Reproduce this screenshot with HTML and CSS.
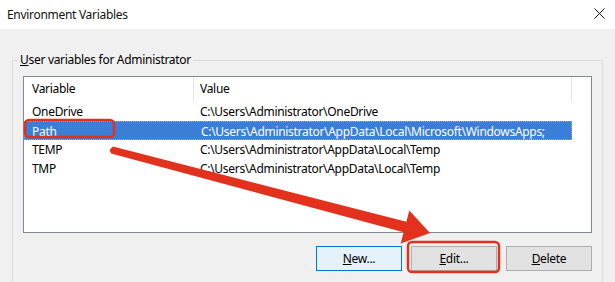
FILE: index.html
```html
<!DOCTYPE html>
<html lang="en">
<head>
    <meta charset="UTF-8">
    <title>Environment Variables</title>
    <link rel="stylesheet" href="styles.css">
</head>
<body>

    <div class="window">
        <div class="titlebar">
            <span class="title">Environment Variables</span>
            <svg class="close" width="11" height="11" viewBox="0 0 11 11">
                <path d="M0.5 0.5 L10.5 10.5 M10.5 0.5 L0.5 10.5" stroke="#111" stroke-width="1" fill="none"/>
            </svg>
        </div>

        <div class="content">
            <fieldset class="group">
                <legend><u>U</u>ser variables for Administrator</legend>
                <div class="group-body">
                    <div class="list">
                        <div class="row header">
                            <div class="cell name">Variable</div>
                            <div class="cell value">Value</div>
                        </div>
                        <div class="row">
                            <div class="cell name">OneDrive</div>
                            <div class="cell value">C:\Users\Administrator\OneDrive</div>
                        </div>
                        <div class="row selected">
                            <div class="cell name">Path</div>
                            <div class="cell value">C:\Users\Administrator\AppData\Local\Microsoft\WindowsApps;</div>
                        </div>
                        <div class="row">
                            <div class="cell name">TEMP</div>
                            <div class="cell value">C:\Users\Administrator\AppData\Local\Temp</div>
                        </div>
                        <div class="row">
                            <div class="cell name">TMP</div>
                            <div class="cell value">C:\Users\Administrator\AppData\Local\Temp</div>
                        </div>
                    </div>

                    <div class="buttons">
                        <button class="btn default"><u>N</u>ew...</button>
                        <button class="btn"><u>E</u>dit...</button>
                        <button class="btn"><u>D</u>elete</button>
                    </div>
                </div>
            </fieldset>
        </div>
    </div>

    <!-- red annotation drawn over the dialog -->
    <svg class="annotation" width="615" height="282" viewBox="0 0 615 282">
        <rect x="25" y="120" width="89" height="17" rx="4" fill="none" stroke="#e2311d" stroke-width="2.5"/>
        <rect x="408" y="242" width="91" height="30" rx="4" fill="none" stroke="#e2311d" stroke-width="2.5"/>
        <polygon fill="#e2311d" points="112.9,146.6 406.4,221.7 409.3,210.6 430,233 400.7,243.4 403.6,232.3 111.1,153.4 109.5,150"/>
    </svg>

</body>
</html>
```

FILE: styles.css
```css
body {
    margin: 0;
    width: 615px;
    height: 282px;
    overflow: hidden;
    background-color: #f0f0f0;
    font-family: 'Noto Sans', 'Liberation Sans', sans-serif;
    font-size: 12px;
    letter-spacing: -0.3px;
    color: #000;
    position: relative;
}
.titlebar {
    height: 29px;
    background: #fff;
    display: flex;
    align-items: center;
    justify-content: space-between;
    padding: 0 10px 0 7px;
}
.title {
    color: #111;
}
.close {
    margin-top: -2px;
}
.content {
    padding: 23px 12px 0 12px;
}
.group {
    margin: 0;
    padding: 0;
    border: 1px solid #dcdcdc;
    height: 240px;
}
.group legend {
    margin-left: 5px;
    padding: 0 2px;
    line-height: 16px;
}
.group-body {
    padding: 8px 10px 0 10px;
}
.list {
    height: 155px;
    background: #fff;
    border: 1px solid #828790;
}
.row {
    display: flex;
    width: 548px;
    height: 19px;
    line-height: 19px;
    box-sizing: border-box;
    white-space: nowrap;
}
.row.header {
    height: 25px;
    line-height: 24px;
}
.cell.name {
    width: 169px;
    padding-left: 8px;
    box-sizing: border-box;
}
.cell.value {
    padding-left: 6px;
    flex: 1;
}
.header .cell.value {
    border-left: 1px solid #e5e5e5;
    border-right: 1px solid #e5e5e5;
}
.row:not(.header) .cell.value {
    padding-left: 7px;
}
.row.selected {
    background: #3b7ed6;
    color: #fff;
    border: 1px dotted #d9a35a;
}
.row.selected .cell.name {
    padding-left: 7px;
}
.buttons {
    display: flex;
    justify-content: flex-end;
    gap: 9px;
    margin-top: 13px;
}
.btn {
    width: 86px;
    height: 25px;
    font-family: inherit;
    font-size: 12px;
    letter-spacing: -0.3px;
    color: #000;
    background: #e1e1e1;
    border: 1px solid #adadad;
    padding: 0;
}
.btn.default {
    background: #e5f1fb;
    border-color: #0078d7;
}
.annotation {
    position: absolute;
    left: 0;
    top: 0;
    pointer-events: none;
}
```
